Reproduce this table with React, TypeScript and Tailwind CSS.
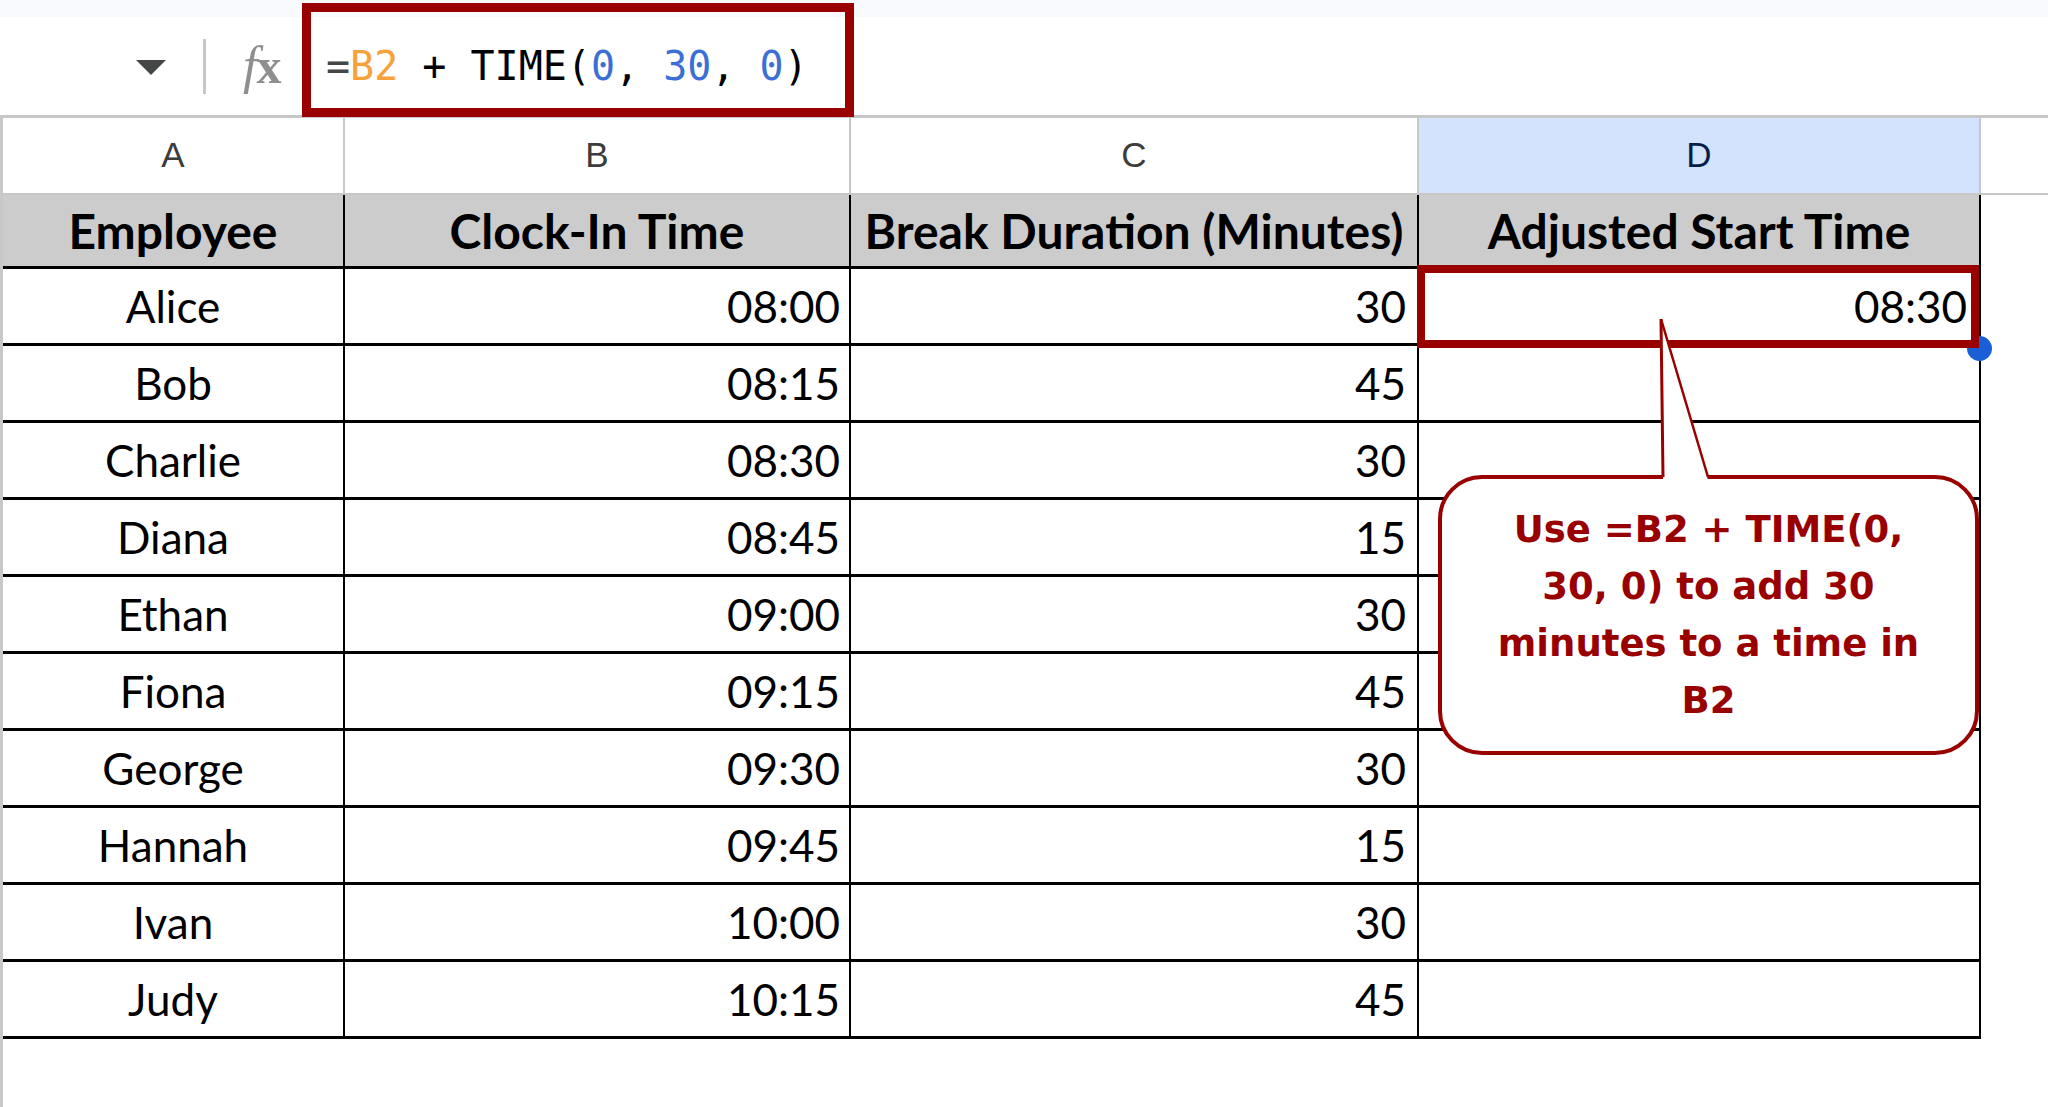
import React from "react";

const rows: [string, string, string, string][] = [
  ["Alice", "08:00", "30", "08:30"],
  ["Bob", "08:15", "45", ""],
  ["Charlie", "08:30", "30", ""],
  ["Diana", "08:45", "15", ""],
  ["Ethan", "09:00", "30", ""],
  ["Fiona", "09:15", "45", ""],
  ["George", "09:30", "30", ""],
  ["Hannah", "09:45", "15", ""],
  ["Ivan", "10:00", "30", ""],
  ["Judy", "10:15", "45", ""],
];

const cellFont = { fontFamily: "Lato, 'Noto Sans', sans-serif" } as const;

export default function App() {
  return (
    <div className="relative w-[2048px] h-[1107px] overflow-hidden bg-white">
      {/* top strip */}
      <div className="h-[17px] bg-[#f8fafd]" />

      {/* formula bar */}
      <div className="flex h-[98px] items-center">
        <div className="w-[136px]" />
        <svg width="30" height="15" viewBox="0 0 30 15" className="mt-[2px]">
          <polygon points="0,0 30,0 15,15" fill="#444746" />
        </svg>
        <div className="w-[37px]" />
        <div className="w-[3px] h-[55px] bg-[#c7c7c7]" />
        <div className="w-[37px]" />
        <div
          className="w-[83px] flex items-center text-[#8f8f8f] leading-none"
          style={{ fontFamily: "'Liberation Serif', serif" }}
        >
          <span className="italic text-[52px]">f</span>
          <span className="font-bold text-[50px] -ml-[1px]">x</span>
        </div>
        <div
          className="text-[40px] leading-none whitespace-pre"
          style={{ fontFamily: "'DejaVu Sans Mono', 'Liberation Mono', monospace" }}
        >
          <span className="text-[#444746]">=</span>
          <span className="text-[#f6a13a]">B2</span>
          <span className="text-black"> + TIME(</span>
          <span className="text-[#3b6fd6]">0</span>
          <span className="text-black">, </span>
          <span className="text-[#3b6fd6]">30</span>
          <span className="text-black">, </span>
          <span className="text-[#3b6fd6]">0</span>
          <span className="text-black">)</span>
        </div>
      </div>

      {/* sheet */}
      <div className="flex">
        <div className="w-[3px] h-[992px] bg-[#c8c8c8] shrink-0" />
        <div className="flex flex-col flex-1">
          {/* column letters */}
          <div
            className="flex h-[80px] border-t-[3px] border-b-[2px] border-[#c7c7c7] text-[35px] text-[#3c3c3c]"
            style={{ fontFamily: "'Liberation Sans', Arial, sans-serif" }}
          >
            <div className="w-[342px] shrink-0 flex items-center justify-center border-r-[2px] border-[#c7c7c7]">A</div>
            <div className="w-[506px] shrink-0 flex items-center justify-center border-r-[2px] border-[#c7c7c7]">B</div>
            <div className="w-[568px] shrink-0 flex items-center justify-center border-r-[2px] border-[#c7c7c7]">C</div>
            <div className="w-[562px] shrink-0 flex items-center justify-center border-r-[2px] border-[#c7c7c7] bg-[#d3e3fd] text-[#041e49]">D</div>
            <div className="flex-1" />
          </div>

          {/* header row */}
          <div className="flex h-[74px] font-bold text-[48px] text-black leading-none" style={cellFont}>
            <div className="w-[342px] shrink-0 flex items-center justify-center bg-[#cccccc] border-r-[2px] border-b-[3px] border-black">Employee</div>
            <div className="w-[506px] shrink-0 flex items-center justify-center bg-[#cccccc] border-r-[2px] border-b-[3px] border-black">Clock-In Time</div>
            <div className="w-[568px] shrink-0 flex items-center justify-center bg-[#cccccc] border-r-[2px] border-b-[3px] border-black whitespace-nowrap">Break Duration (Minutes)</div>
            <div className="w-[562px] shrink-0 flex items-center justify-center bg-[#cccccc] border-r-[2px] border-b-[3px] border-black">Adjusted Start Time</div>
            <div className="flex-1" />
          </div>

          {rows.map((r) => (
            <div key={r[0]} className="flex h-[77px] text-[44px] text-black leading-none" style={cellFont}>
              <div className="w-[342px] shrink-0 flex items-center justify-center border-r-[2px] border-b-[3px] border-black">{r[0]}</div>
              <div className="w-[506px] shrink-0 flex items-center justify-end pr-[9px] border-r-[2px] border-b-[3px] border-black">{r[1]}</div>
              <div className="w-[568px] shrink-0 flex items-center justify-end pr-[11px] border-r-[2px] border-b-[3px] border-black">{r[2]}</div>
              <div className="w-[562px] shrink-0 flex items-center justify-end pr-[12px] border-r-[2px] border-b-[3px] border-black">{r[3]}</div>
              <div className="flex-1" />
            </div>
          ))}
        </div>
      </div>

      {/* annotation: formula box */}
      <div className="absolute left-[302px] top-[3px] w-[552px] h-[114px] border-[9px] border-[#990000]" />

      {/* fill handle */}
      <div className="absolute left-[1967px] top-[336px] w-[25px] h-[25px] rounded-full bg-[#1b5fd6]" />

      {/* annotation: selected cell */}
      <div className="absolute left-[1417px] top-[265px] w-[562px] h-[83px] border-[8px] border-[#990000]" />

      {/* callout box */}
      <div className="absolute left-[1438px] top-[475px] w-[541px] h-[280px] rounded-[44px] border-[4px] border-[#990000] bg-white flex items-center justify-center">
        <div
          className="text-center font-bold text-[37px] leading-[57px] text-[#990000]"
          style={{ fontFamily: "'DejaVu Sans', 'Noto Sans', sans-serif" }}
        >
          Use =B2 + TIME(0,
          <br />
          30, 0) to add 30
          <br />
          minutes to a time in
          <br />
          B2
        </div>
      </div>

      {/* callout tail */}
      <svg
        className="absolute left-[1650px] top-[310px]"
        width="70"
        height="172"
        viewBox="0 0 70 172"
      >
        <polygon points="11,9 13,170 58,170" fill="white" />
        <line x1="11" y1="9" x2="13" y2="167" stroke="#990000" strokeWidth="3" />
        <line x1="11" y1="9" x2="58" y2="167" stroke="#990000" strokeWidth="2.5" />
      </svg>
    </div>
  );
}
